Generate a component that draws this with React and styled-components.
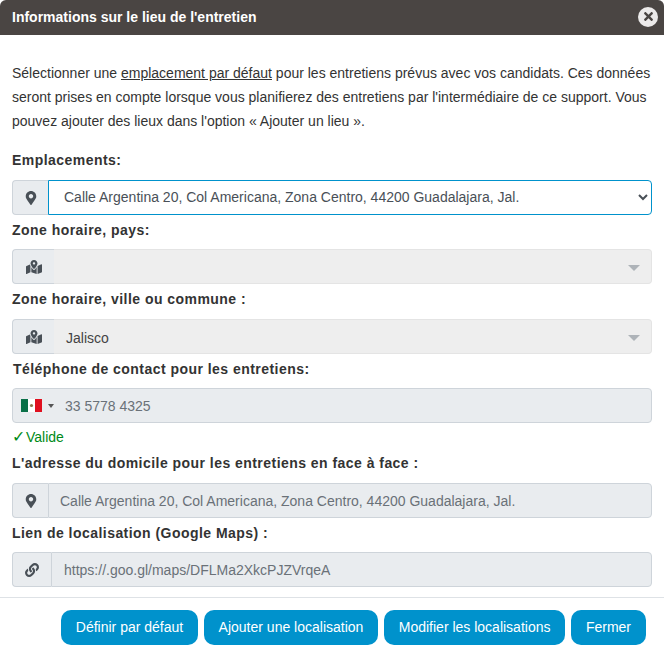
import React from 'react';
import styled, { createGlobalStyle } from 'styled-components';
import { FaMapMarkerAlt, FaMapMarkedAlt, FaLink, FaTimes } from 'react-icons/fa';

const Global = createGlobalStyle`
  html, body { margin: 0; padding: 0; background: #fff; }
  * { box-sizing: border-box; }
`;
const Modal = styled.div`
  width: 664px; height: 652px; background: #fff; overflow: hidden;
  font-family: "Liberation Sans", Arial, sans-serif; font-size: 14px; color: #495057;
`;
const Header = styled.header`
  height: 35px; background: #4a4543; border-radius: 6px 6px 0 0;
  display: flex; align-items: center; justify-content: space-between;
  padding: 0 6px 2px 12px;
`;
const Title = styled.h1`
  margin: 0; font-size: 14px; font-weight: 700; color: #fff;
`;
const Close = styled.button`
  width: 20px; height: 20px; border-radius: 50%; border: 0; padding: 0;
  background: #eceaea; color: #4a4543; display: flex; align-items: center; justify-content: center;
  font-size: 13px;
`;
const Body = styled.div`padding: 26px 12px 0;`;
const Intro = styled.p`
  margin: 0 0 17px; line-height: 24px; color: #333;
  u { text-decoration: underline; }
`;
const Label = styled.label`
  display: block; font-weight: 700; color: #333; letter-spacing: .46px; line-height: 20px;
  margin-bottom: ${p => p.$mb ?? 10}px; padding-left: ${p => p.$indent ? 1 : 0}px;
`;
const Group = styled.div`
  display: flex; height: 35px; margin-bottom: ${p => p.$mb ?? 5}px;
`;
const Addon = styled.span`
  flex: none; width: ${p => p.$w ?? 36}px; display: flex; align-items: center; justify-content: center;
  background: #e9ecef; border: 1px solid #ced4da; border-right: 0; border-radius: 4px 0 0 4px;
  color: #495057; font-size: ${p => p.$size ?? 14}px;
`;
const NativeSelect = styled.select`
  flex: 1; min-width: 0; height: 35px; padding: 0 10px 2px 11px; font: inherit; color: #495057; background: #fff;
  border: 1px solid #0092cc; border-radius: 0 4px 4px 0; outline: 0;
`;
const Combo = styled.div`
  flex: 1; display: flex; align-items: center; justify-content: space-between;
  background: #eee; border: 1px solid #e4e4e4; border-left: 0; border-radius: 0 4px 4px 0;
  padding: 3px 11px 0 12px; color: #444;
`;
const Caret = styled.i`
  width: 0; height: 0; border: 6px solid transparent; border-top-color: #aeb3b8; border-bottom: 0; 
`;
const ReadOnly = styled.div`
  flex: 1; display: flex; align-items: center; background: #e9ecef; border: 1px solid #ced4da;
  border-radius: ${p => p.$full ? '4px' : '0 4px 4px 0'}; padding: 0 ${p => p.$pad ?? 12}px;
  color: #6a7178;
`;
const FlagBox = styled.span`
  display: flex; align-items: center; gap: 6px; margin-right: 11px;
`;
const FlagCaret = styled.i`
  width: 0; height: 0; border: 3px solid transparent; border-top: 4px solid #555; border-bottom: 0;
`;
const Valid = styled.div`
  color: #008a17; line-height: 16px; margin: 6px 0 8px; display: flex;
`;
const Check = styled.span`width: 14px; font-size: 16px;`;
const Footer = styled.footer`
  margin-top: 10px; border-top: 1px solid #dee2e6; padding: 12px 18px 0 0;
  display: flex; justify-content: flex-end; gap: 5.4px;
`;
const Btn = styled.button`
  height: 35px; padding: 0 15px 2px; border: 0; border-radius: 10px; background: #0092cc; color: #fff;
  font: inherit; white-space: nowrap;
`;

const Mexico = () => (
  <svg width="21" height="13" viewBox="0 0 21 13">
    <rect width="7" height="13" fill="#0a7048" />
    <rect x="7" width="7" height="13" fill="#fff" />
    <rect x="14" width="7" height="13" fill="#e0101f" />
    <circle cx="10.5" cy="6.5" r="1.6" fill="#8c7a4f" />
  </svg>
);

export default function App() {
  return (
    <Modal>
      <Global />
      <Header>
        <Title>Informations sur le lieu de l'entretien</Title>
        <Close aria-label="Fermer"><FaTimes /></Close>
      </Header>
      <Body>
        <Intro>
          Sélectionner une <u>emplacement par défaut</u> pour les entretiens prévus avec vos candidats. Ces données seront prises en compte lorsque vous planifierez des entretiens par l'intermédiaire de ce support. Vous pouvez ajouter des lieux dans l'option « Ajouter un lieu ».
        </Intro>
        <Label>Emplacements:</Label>
        <Group>
          <Addon><FaMapMarkerAlt /></Addon>
          <NativeSelect defaultValue="a">
            <option value="a">Calle Argentina 20, Col Americana, Zona Centro, 44200 Guadalajara, Jal.</option>
          </NativeSelect>
        </Group>
        <Label $mb={9}>Zone horaire, pays:</Label>
        <Group>
          <Addon $w={42} $size={16}><FaMapMarkedAlt /></Addon>
          <Combo><span /><Caret /></Combo>
        </Group>
        <Label>Zone horaire, ville ou commune :</Label>
        <Group>
          <Addon $w={42} $size={16}><FaMapMarkedAlt /></Addon>
          <Combo><span>Jalisco</span><Caret /></Combo>
        </Group>
        <Label $indent $mb={9}>Téléphone de contact pour les entretiens:</Label>
        <Group $mb={0}>
          <ReadOnly $full $pad={8}>
            <FlagBox><Mexico /><FlagCaret /></FlagBox>
            33 5778 4325
          </ReadOnly>
        </Group>
        <Valid><Check>✓</Check>Valide</Valid>
        <Label>L'adresse du domicile pour les entretiens en face à face :</Label>
        <Group>
          <Addon><FaMapMarkerAlt /></Addon>
          <ReadOnly $pad={11}>Calle Argentina 20, Col Americana, Zona Centro, 44200 Guadalajara, Jal.</ReadOnly>
        </Group>
        <Label $mb={9}>Lien de localisation (Google Maps) :</Label>
        <Group $mb={0}>
          <Addon $w={39}><FaLink /></Addon>
          <ReadOnly>https://.goo.gl/maps/DFLMa2XkcPJZVrqeA</ReadOnly>
        </Group>
      </Body>
      <Footer>
        <Btn>Définir par défaut</Btn>
        <Btn>Ajouter une localisation</Btn>
        <Btn>Modifier les localisations</Btn>
        <Btn>Fermer</Btn>
      </Footer>
    </Modal>
  );
}
